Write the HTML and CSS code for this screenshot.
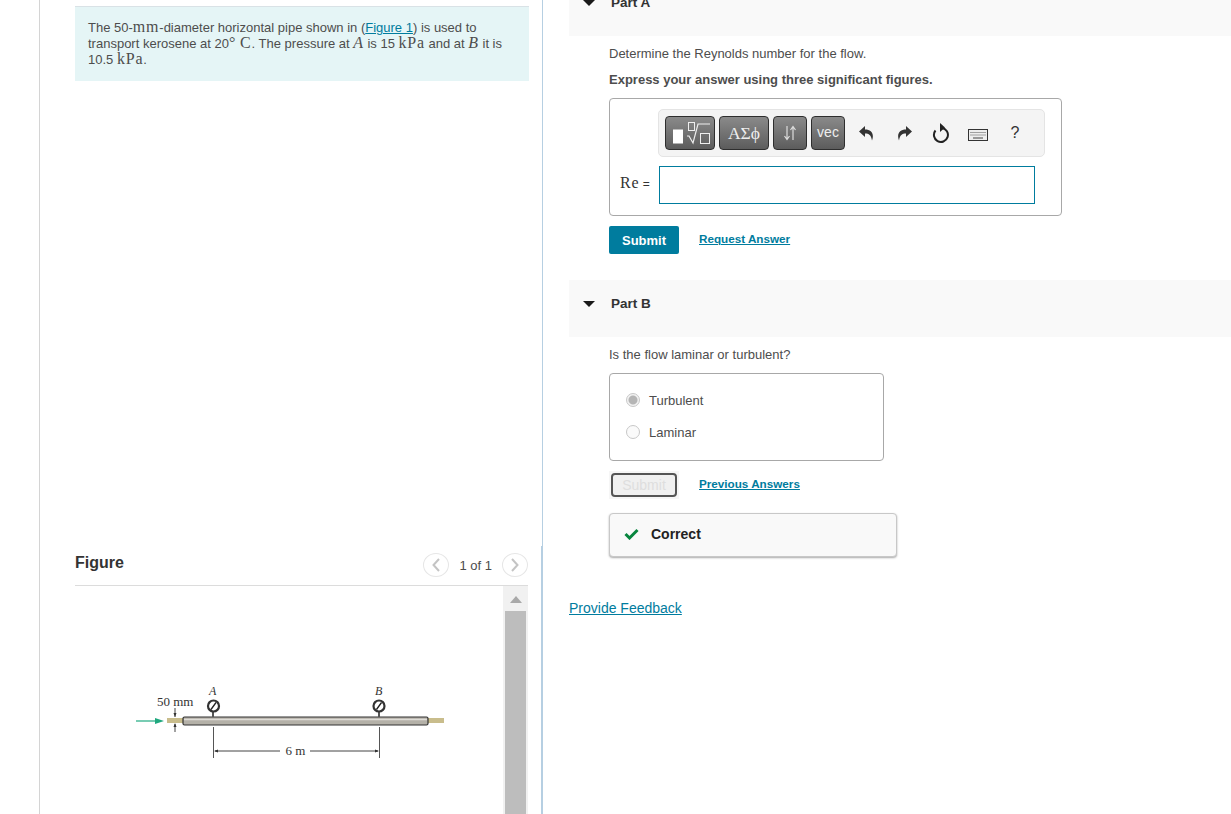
FILE: index.html
```html
<!DOCTYPE html>
<html lang="en">
<head>
<meta charset="utf-8">
<title>Part A</title>
<link rel="stylesheet" href="styles.css">
</head>
<body>
<div class="page">
  <div class="left">
    <div class="problem">
      <p>The 50-<span class="m">mm</span>-diameter horizontal pipe shown in (<a href="#">Figure 1</a>) is used to<br>transport kerosene at 20<span class="m">°&#8201;C</span>. The pressure at <i class="m">A</i> is 15 <span class="m">kPa</span> and at <i class="m">B</i> it is<br>10.5 <span class="m">kPa</span>.</p>
    </div>
    <div class="figure-head">
      <h2>Figure</h2>
      <div class="pager">
        <span class="circ"><svg width="8" height="14" viewBox="0 0 8 14"><path d="M7 1 1.500 7 7 13" fill="none" stroke="#c4c4c4" stroke-width="2"/></svg></span>
        <span class="pager-text">1 of 1</span>
        <span class="circ"><svg width="8" height="14" viewBox="0 0 8 14"><path d="M1 1l5.500 6L1 13" fill="none" stroke="#c4c4c4" stroke-width="2"/></svg></span>
      </div>
    </div>
    <div class="figure-body">
      <div class="canvas">
        <svg width="428" height="228" viewBox="0 0 428 228">
          <g fill="none">
            <rect x="92" y="132" width="16" height="5" fill="#c9bd8c"/>
            <rect x="353" y="132" width="16" height="5" fill="#c9bd8c"/>
            <path d="M61 135h20" stroke="#2fb08a" stroke-width="1.300"/>
            <path d="M89 135l-9-3v6z" fill="#1fa87e"/>
            <rect x="108" y="131" width="245" height="8" rx="1.500" fill="#b4b1a8" stroke="#333" stroke-width="1.200"/>
            <path d="M109 133.500h243" stroke="#dedcd6" stroke-width="1.600"/>
            <path d="M138 125v6M304 125v6" stroke="#555" stroke-width="2"/>
            <circle cx="138.500" cy="120" r="5.500" fill="#fff" stroke="#333" stroke-width="2.200"/>
            <circle cx="304" cy="120" r="5.500" fill="#fff" stroke="#333" stroke-width="2.200"/>
            <path d="M136 123.500l5-7M301.500 123.500l5-7" stroke="#222" stroke-width="1.300"/>
            <path d="M100 122v9M100 138v8" stroke="#444"/>
            <path d="M100 131l-1.500-4h3zM100 137l-1.500 4h3z" fill="#333"/>
            <path d="M138.500 141v31M304.500 141v31" stroke="#555"/>
            <path d="M140 165h65M235 165h68" stroke="#444"/>
            <path d="M139 165l4-1.500v3zM304 165l-4-1.500v3z" fill="#333"/>
          </g>
          <text x="82" y="120" class="fig-t">50 mm</text>
          <text x="134" y="109" class="fig-i">A</text>
          <text x="300" y="109" class="fig-i">B</text>
          <text x="210.500" y="169" class="fig-t">6 m</text>
        </svg>
      </div>
      <div class="scrollbar">
        <svg class="up" width="12" height="7" viewBox="0 0 12 7"><path d="M6 0l6 7H0z" fill="#a9a9a9"/></svg>
        <div class="thumb"></div>
      </div>
    </div>
  </div>
  <div class="right">
    <section>
      <div class="part-head"><span class="tri"></span><span>Part A</span></div>
      <div class="part-body">
        <p class="q q-a">Determine the Reynolds number for the flow.</p>
        <p class="hint">Express your answer using three significant figures.</p>
        <div class="answer">
          <div class="toolbar">
            <button class="tb b1"><svg width="48" height="32" viewBox="0 0 48 32"><rect x="7" y="12.500" width="10" height="14" fill="#fff"/><rect x="22.500" y="5.500" width="6" height="8" fill="none" stroke="#eee"/><path d="M21 19h2l4 7 5-19h12" fill="none" stroke="#eee" stroke-width="1.200"/><rect x="34.500" y="16.500" width="9" height="10" fill="none" stroke="#eee"/></svg></button>
            <button class="tb b2">ΑΣϕ</button>
            <button class="tb b3"><svg width="14" height="16" viewBox="0 0 14 16"><path d="M4 1v13M1.500 11 4 14.500 6.500 11M10 15V2M7.500 5 10 1.500 12.500 5" fill="none" stroke="#ddd" stroke-width="1.200"/></svg></button>
            <button class="tb b4">vec</button>
            <span class="tool t1"><svg width="15" height="15" viewBox="0 0 15 15"><path d="M6 0 0 5.500 6 11V7.500c4 0 6 1.500 7 7 2.500-6.500-.5-11-7-11z" fill="#333"/></svg></span>
            <span class="tool t2"><svg width="15" height="15" viewBox="0 0 15 15"><path d="M9 0l6 5.500L9 11V7.500c-4 0-6 1.500-7 7C-.5 8 2.500 3.500 9 3.500z" fill="#333"/></svg></span>
            <span class="tool t3"><svg width="18" height="20" viewBox="0 0 18 20"><path d="M10 5a7 7 0 1 1-6.500 2.500" fill="none" stroke="#222" stroke-width="2"/><path d="M8 0l5 4.500L8 9z" fill="#222"/></svg></span>
            <span class="tool t4"><svg width="20" height="12" viewBox="0 0 20 12"><rect x=".5" y=".5" width="19" height="11" fill="#eee" stroke="#333"/><path d="M2.500 3.500h15M2.500 6h15" stroke="#555" stroke-dasharray="1 1"/><path d="M5 9h10" stroke="#444"/></svg></span>
            <span class="tool t5">?</span>
          </div>
          <div class="eq">
            <span class="eq-label"><span class="m">Re</span> =</span>
            <div class="input"></div>
          </div>
        </div>
        <div class="actions">
          <button class="submit">Submit</button>
          <a href="#" class="act-link">Request Answer</a>
        </div>
      </div>
    </section>
    <section class="part-b">
      <div class="part-head"><span class="tri"></span><span>Part B</span></div>
      <div class="part-body">
        <p class="q q-b">Is the flow laminar or turbulent?</p>
        <div class="choices">
          <div class="choice"><span class="radio on"></span>Turbulent</div>
          <div class="choice"><span class="radio"></span>Laminar</div>
        </div>
        <div class="actions a2">
          <span class="sub-wrap"><button class="submit off">Submit</button></span>
          <a href="#" class="act-link">Previous Answers</a>
        </div>
        <div class="correct">
          <svg width="15" height="12" viewBox="0 0 15 12"><path d="M1.500 6 5.500 10 13.500 2" fill="none" stroke="#07853e" stroke-width="3"/></svg>
          <b>Correct</b>
        </div>
      </div>
    </section>
    <a href="#" class="feedback">Provide Feedback</a>
  </div>
</div>
</body>
</html>
```

FILE: styles.css
```css
* { box-sizing: border-box; }
html, body { margin: 0; height: 100%; overflow: hidden; background: #fff; }
body { font-family: "Liberation Sans", Arial, sans-serif; font-size: 13px; color: #4d4d4d; }
p { margin: 0; }
a { color: #007c9e; }
.m { font-family: "Liberation Serif", serif; font-size: 16px; letter-spacing: .8px; line-height: 0; }
.page { display: flex; height: 814px; padding-left: 39px; }
.left { position: relative; width: 504px; height: 814px; flex: none; border-left: 1px solid #d4d4d4; border-right: 1px solid #b6cfe2; padding: 6px 13px 0 35px; }
.left::after { content: ""; position: absolute; right: -1px; top: 546px; bottom: 0; width: 2px; background: #b6cfe2; }
.problem { height: 75px; background: #e5f5f6; border-top: 1px solid #d9e2e6; padding: 13px 13px; line-height: 16px; font-size: 13px; white-space: nowrap; }
.figure-head { display: flex; justify-content: space-between; align-items: center; height: 41px; margin-top: 464px; margin-right: 1px; border-bottom: 1px solid #dcdcdc; padding-bottom: 1px; }
.figure-head h2 { margin: 0 0 3px; font-size: 16px; font-weight: bold; color: #333; }
.pager { display: flex; align-items: center; gap: 10px; }
.circ { width: 26px; height: 24px; border: 1px solid #e6e6e6; border-radius: 50%; display: flex; align-items: center; justify-content: center; }
.pager-text { font-size: 13px; color: #4d4d4d; padding-top: 2px; }
.figure-body { display: flex; height: 240px; margin-right: 1px; }
.canvas { width: 428px; flex: none; }
.fig-t { font-family: "Liberation Serif", serif; font-size: 13px; fill: #333; }
.fig-i { font-family: "Liberation Serif", serif; font-size: 12px; font-style: italic; fill: #333; }
.scrollbar { width: 25px; background: #f1f1f1; display: flex; flex-direction: column; align-items: center; }
.up { margin-top: 10px; }
.thumb { width: 21px; margin-top: 8px; flex: 1; background: #bdbdbd; }

.right { flex: 1; margin-left: 26px; margin-top: -21px; min-width: 0; }
.part-head { height: 57px; background: #f9f9f9; display: flex; align-items: flex-start; padding: 16px 0 0 14px; font-size: 13.500px; font-weight: bold; color: #333; gap: 16px; }
.tri { width: 0; height: 0; margin-top: 5px; border-left: 6px solid transparent; border-right: 6px solid transparent; border-top: 6px solid #1a1a1a; }
.part-body { padding-left: 40px; }
.part-b { margin-top: 26px; }
.q { font-size: 13px; line-height: 16px; color: #4d4d4d; }
.q-a { padding-top: 10px; }
.q-b { padding-top: 10px; }
.hint { margin-top: 10px; font-size: 13px; font-weight: bold; line-height: 16px; color: #4d4d4d; }
.answer { width: 453px; height: 118px; margin-top: 10px; border: 1px solid #a8a8a8; border-radius: 4px; padding: 10px 0 0 48px; }
.toolbar { width: 387px; height: 48px; background: #f4f4f4; border: 1px solid #e4e4e4; border-radius: 5px; display: flex; align-items: center; padding-left: 6px; }
.tb { height: 34px; padding: 0; border: 1px solid #2e2e2e; border-radius: 4px; background: linear-gradient(#8a8a8a, #5c5c5c); color: #eee; display: flex; align-items: center; justify-content: center; flex: none; }
.b1 { width: 50px; margin-right: 4px; }
.b2 { width: 50px; margin-right: 4px; font-family: "Liberation Serif", serif; font-size: 17.500px; }
.b3 { width: 34px; margin-right: 4px; }
.b4 { width: 34px; font-family: "Liberation Sans", sans-serif; font-size: 14px; padding-bottom: 2px; }
.tool { display: flex; justify-content: center; align-items: center; flex: none; }
.t1 { margin-left: 14px; width: 15px; }
.t2 { margin-left: 23px; width: 15px; }
.t3 { margin-left: 20px; width: 18px; padding-bottom: 1px; }
.t4 { margin-left: 18px; width: 20px; padding-top: 3px; }
.t5 { margin-left: 22px; width: 10px; font-size: 16px; color: #333; }
.eq { display: flex; align-items: center; margin-top: 9px; margin-left: -38px; }
.eq-label { width: 39px; flex: none; font-size: 12px; color: #333; white-space: nowrap; padding-bottom: 3px; }
.input { width: 376px; height: 38px; border: 1px solid #007c9e; background: #fff; }
.actions { display: flex; align-items: center; gap: 20px; margin-top: 10px; height: 28px; }
.submit { width: 70px; height: 28px; padding: 0; border: 0; border-radius: 2px; background: #007c9e; color: #fff; font: bold 13px "Liberation Sans", sans-serif; }
.act-link { font-size: 11.700px; font-weight: bold; margin-top: -3px; }
.choices { width: 275px; height: 88px; margin-top: 10px; border: 1px solid #a8a8a8; border-radius: 4px; padding: 10px 0 0 16px; }
.choice { display: flex; align-items: center; height: 32px; gap: 9px; font-size: 13px; color: #4d4d4d; }
.radio { width: 14px; height: 14px; border-radius: 50%; border: 1px solid #c8c8c8; background: #fafafa; flex: none; }
.radio.on { background: radial-gradient(circle, #b5b5b5 0 4px, #f2f2f2 5px); }
.a2 { margin-top: 10px; }
.sub-wrap { width: 70px; height: 28px; background: #f6f6f6; display: flex; align-items: center; justify-content: center; }
.submit.off { width: 66px; height: 24px; background: #f0f0f0; border: 2px solid #555; border-radius: 4px; color: #dedede; font-weight: normal; font-size: 14px; }
.correct { display: flex; align-items: center; gap: 12px; width: 288px; height: 44px; margin-top: 14px; border: 1px solid #c8c8c8; border-radius: 4px; background: #f9f9f9; box-shadow: 0 1px 2px #aaa; padding: 0 0 2px 14px; }
.correct b { font-size: 14px; color: #222; }
.feedback { display: inline-block; margin-top: 43px; font-size: 14px; line-height: 16px; }
```
